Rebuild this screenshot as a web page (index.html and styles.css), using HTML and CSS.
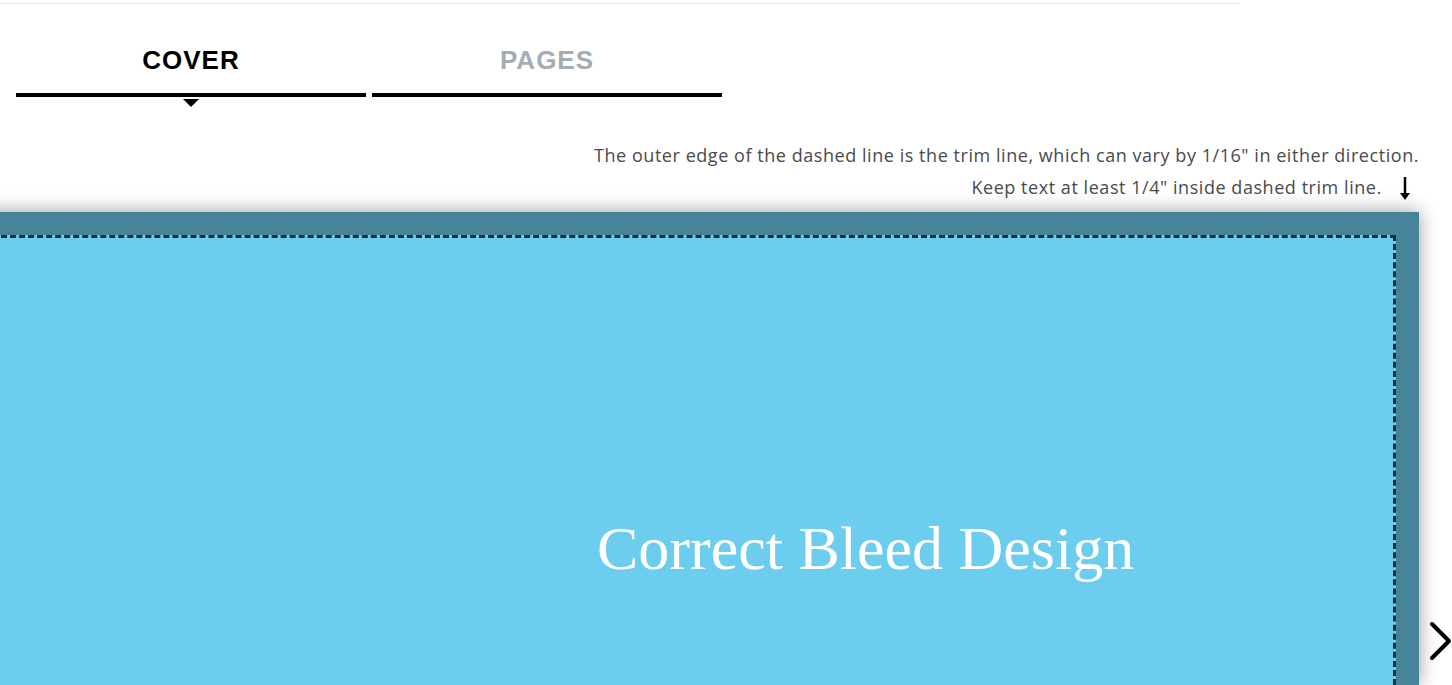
FILE: index.html
```html
<!DOCTYPE html>
<html lang="en">
<head>
    <meta charset="UTF-8">
    <title>Cover Design</title>
    <link rel="stylesheet" href="styles.css">
</head>
<body>

    <!-- Top rule -->
    <div class="top-rule"></div>

    <!-- Tabs -->
    <nav class="tabs">
        <a href="#" class="tab active">COVER</a>
        <a href="#" class="tab">PAGES</a>
    </nav>

    <!-- Trim notes -->
    <div class="notes">
        <p>The outer edge of the dashed line is the trim line, which can vary by 1/16" in either direction.</p>
        <p class="keep">Keep text at least 1/4" inside dashed trim line.
            <svg class="down-arrow" width="12" height="24" viewBox="0 0 12 24">
                <line x1="6" y1="0" x2="6" y2="18" stroke="#000" stroke-width="2.5"/>
                <polygon points="1,16 11,16 6,23" fill="#000"/>
            </svg>
        </p>
    </div>

    <!-- Cover preview -->
    <div class="cover">
        <div class="trim">
            <div class="cover-title">Correct Bleed Design</div>
        </div>
    </div>

    <!-- Next button -->
    <a href="#" class="next">
        <svg width="26" height="42" viewBox="0 0 26 42">
            <polyline points="4,4 21,21 4,38" fill="none" stroke="#000" stroke-width="4" stroke-linecap="round" stroke-linejoin="round"/>
        </svg>
    </a>

</body>
</html>
```

FILE: styles.css
```css
/* General */
* {
    margin: 0;
    padding: 0;
    box-sizing: border-box;
}

body {
    background-color: #fff;
    font-family: "Open Sans", Arial, sans-serif;
    height: 685px;
    overflow: hidden;
    position: relative;
}

.top-rule {
    width: 1240px;
    height: 1px;
    margin-top: 3px;
    background-color: #e6e6e6;
}

/* Tabs */
.tabs {
    display: flex;
    gap: 6px;
    padding-left: 16px;
}

.tab {
    position: relative;
    width: 350px;
    height: 48px;
    padding-top: 41px;
    border-bottom: 4px solid #000;
    text-align: center;
    font-family: "Liberation Sans", Arial, sans-serif;
    font-weight: bold;
    font-size: 26px;
    letter-spacing: 1px;
    color: #a3adb3;
    text-decoration: none;
    box-sizing: content-box;
}

.tab.active {
    color: #000;
}

.tab.active::after {
    content: "";
    position: absolute;
    left: 50%;
    top: 100%;
    margin-left: -8px;
    margin-top: 6px;
    border-left: 8px solid transparent;
    border-right: 8px solid transparent;
    border-top: 8px solid #000;
}

/* Notes */
.notes {
    margin-top: 42px;
    padding-right: 33px;
    text-align: right;
    font-size: 18px;
    letter-spacing: 0.55px;
    line-height: 32px;
    color: #4a4a4a;
}

.notes .keep {
    padding-right: 8px;
}

.down-arrow {
    vertical-align: middle;
    margin-left: 12px;
}

/* Cover */
.cover {
    margin-top: 9px;
    margin-left: -40px;
    width: 1459px;
    height: 473px;
    padding: 23px 23px 0 23px;
    background-color: #468499;
    box-shadow: 0 0 18px rgba(0, 0, 0, 0.4);
}

.trim {
    height: 100%;
    border: 3px dashed #15303c;
    border-bottom: none;
    background-color: #6ccdef;
    padding-top: 279px;
    padding-left: 611px;
}

.cover-title {
    font-family: "Liberation Serif", "Times New Roman", serif;
    font-size: 62px;
    line-height: 62px;
    color: #fff;
}

/* Next arrow */
.next {
    position: absolute;
    left: 1428px;
    top: 620px;
}
```
